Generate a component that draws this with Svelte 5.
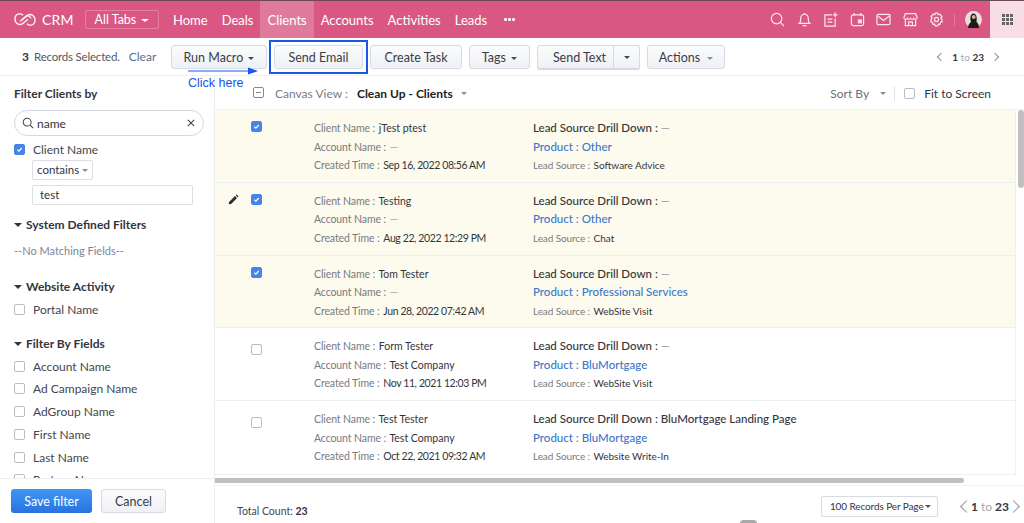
<script>
  const tabs = ['Home', 'Deals', 'Clients', 'Accounts', 'Activities', 'Leads'];

  const records = [
    { name: 'jTest ptest', account: '—', created: 'Sep 16, 2022 08:56 AM', drill: '—', product: 'Other', source: 'Software Advice', selected: true },
    { name: 'Testing', account: '—', created: 'Aug 22, 2022 12:29 PM', drill: '—', product: 'Other', source: 'Chat', selected: true, edit: true },
    { name: 'Tom Tester', account: '—', created: 'Jun 28, 2022 07:42 AM', drill: '—', product: 'Professional Services', source: 'WebSite Visit', selected: true },
    { name: 'Form Tester', account: 'Test Company', created: 'Nov 11, 2021 12:03 PM', drill: '—', product: 'BluMortgage', source: 'WebSite Visit', selected: false },
    { name: 'Test Tester', account: 'Test Company', created: 'Oct 22, 2021 09:32 AM', drill: 'BluMortgage Landing Page', product: 'BluMortgage', source: 'Website Write-In', selected: false }
  ];

  const fields = ['Account Name', 'Ad Campaign Name', 'AdGroup Name', 'First Name', 'Last Name', 'Partner Name'];
</script>

<div class="page">
  <header class="nav">
    <div class="brand">
      <svg width="22" height="15" viewBox="0 0 22 15" fill="none" stroke="#fff" stroke-width="1.4" opacity="0.9">
        <path d="M9 3.2 C6.5 0.8 1 1.4 1 7 C1 11.6 5.6 14 9 11.4 L14 7.2" />
        <path d="M13 11.8 C15.5 14.2 21 13.6 21 8 C21 3.4 16.4 1 13 3.6 L8 7.8" />
        <path d="M6 9.5 L12 4.4 C13.5 3.2 16.5 4 17 6.5" />
      </svg>
      <span>CRM</span>
    </div>
    <button class="alltabs">All Tabs <i class="caret white"></i></button>
    <nav class="tabs">
      {#each tabs as tab}
        <span class="tab" class:active={tab === 'Clients'}>{tab}</span>
      {/each}
      <span class="more"><b></b><b></b><b></b></span>
    </nav>
    <div class="nav-icons">
      <svg viewBox="0 0 16 16" width="15" height="15"><circle cx="7" cy="7" r="5.6" /><path d="M11 11 L15 15" /></svg>
      <svg viewBox="0 0 16 16" width="15" height="15"><path d="M2.5 12.2 C4 11 4 9 4 6.8 C4 4.4 5.8 2.4 8 2.4 C10.2 2.4 12 4.4 12 6.8 C12 9 12 11 13.5 12.2 Z" /><path d="M8 1 V2.4 M6 14.6 H10" /></svg>
      <svg viewBox="0 0 16 16" width="15" height="15"><path d="M9.5 3 H2 V15 H13 V7" /><path d="M4.8 7.5 H10 M4.8 10.8 H10" /><path d="M13 0.5 V5.5 M10.5 3 H15.5" /></svg>
      <svg viewBox="0 0 16 16" width="15" height="15"><rect x="1.5" y="3" width="13" height="11.5" rx="2" /><path d="M4.5 1 V4 M11.5 1 V4" /><rect x="9" y="8.5" width="3" height="3" fill="#fbe6ee" /></svg>
      <svg viewBox="0 0 16 16" width="15" height="15"><rect x="1" y="2.5" width="14" height="11" rx="1.5" /><path d="M1.5 4 L8 9 L14.5 4" /></svg>
      <svg viewBox="0 0 16 16" width="15" height="15"><path d="M2.5 1.8 H13.5 L15 6 C15 8.2 12 8.2 11.5 6.8 C11 8.2 8.6 8.2 8 6.8 C7.4 8.2 5 8.2 4.5 6.8 C4 8.2 1 8.2 1 6 Z" /><path d="M2.5 8.2 V14.5 H13.5 V8.2" /><path d="M6 14.5 V10.5 H10 V14.5" /></svg>
      <svg viewBox="0 0 16 16" width="15" height="15"><path d="M6.6 1.2 H9.4 L9.9 3 L11.7 2.4 L13.9 5 L12.6 6.4 L13.9 8 L13.9 10.6 L12.2 11 L11.7 13.2 L9.9 13 L9.4 14.8 H6.6 L6.1 13 L4.3 13.2 L3.8 11 L2.1 10.6 V8 L3.4 6.4 L2.1 5 L4.3 2.4 L6.1 3 Z" /><circle cx="8" cy="8" r="2.2" /></svg>
      <span class="vsep"></span>
      <svg class="avatar" viewBox="0 0 17 17" width="17" height="17">
        <circle cx="8.5" cy="8.5" r="8.5" fill="#e9dfd6" />
        <path d="M3 17 C3.5 13 5 12 6 11 C5 8 5 2.5 8.5 2.5 C12 2.5 12 8 11.5 11 C12.5 12 14 13 14 17 Z" fill="#1d1a1b" />
        <circle cx="8.7" cy="6" r="2" fill="#d9ae95" />
      </svg>
    </div>
    <div class="grid-tile">
      {#each Array(9) as _}<i></i>{/each}
    </div>
  </header>

  <div class="toolbar">
    <div class="selected"><b>3</b> <span class="rec">Records Selected.</span> <span class="clear">Clear</span></div>
    <div class="actions">
      <button class="btn w-macro">Run Macro <i class="caret"></i></button>
      <button class="btn w-email">Send Email</button>
      <button class="btn w-task">Create Task</button>
      <button class="btn w-tags">Tags <i class="caret"></i></button>
      <div class="btn split">
        <span class="split-main">Send Text</span>
        <span class="split-side"><i class="caret"></i></span>
      </div>
      <button class="btn w-actions">Actions <i class="caret light wide"></i></button>
    </div>
    <div class="pager">
      <i class="chev left"></i>
      <span><b>1</b> <em>to</em> <b>23</b></span>
      <i class="chev right"></i>
    </div>
  </div>

  <div class="body">
    <aside class="side">
      <div class="side-scroll">
        <h3>Filter Clients by</h3>
        <div class="search">
          <svg viewBox="0 0 14 14" width="12" height="12"><circle cx="6" cy="6" r="4.6" /><path d="M9.5 9.5 L13 13" /></svg>
          <span>name</span>
          <svg class="x" viewBox="0 0 10 10" width="8" height="8"><path d="M1 1 L9 9 M9 1 L1 9" /></svg>
        </div>
        <label class="check first"><span class="box on"><svg viewBox="0 0 12 12"><path d="M3 6.2 L5.2 8.2 L9 4" /></svg></span>Client Name</label>
        <div class="contains">contains <i class="caret light"></i></div>
        <div class="test">test</div>

        <h4 class="sys"><i class="caret dark"></i>System Defined Filters</h4>
        <p class="none">--No Matching Fields--</p>
        <h4 class="web"><i class="caret dark"></i>Website Activity</h4>
        <label class="check portal"><span class="box"></span>Portal Name</label>
        <h4 class="by"><i class="caret dark"></i>Filter By Fields</h4>
        <div class="field-list">
          {#each fields as field}
            <label class="check"><span class="box"></span>{field}</label>
          {/each}
        </div>
      </div>
      <div class="side-foot">
        <button class="save">Save filter</button>
        <button class="btn cancel">Cancel</button>
      </div>
    </aside>

    <main class="main">
      <div class="view-bar">
        <span class="minus"></span>
        <span class="canvas">Canvas View :</span>
        <strong>Clean Up - Clients</strong>
        <i class="caret light"></i>
        <div class="view-right">
          <span class="sort">Sort By</span>
          <i class="caret light"></i>
          <span class="vline"></span>
          <span class="box"></span>
          <span class="fit">Fit to Screen</span>
        </div>
      </div>

      <div class="list-wrap">
        <div class="list">
          {#each records as r}
            <div class="row" class:hl={r.selected}>
              <div class="row-edit">
                {#if r.edit}
                  <svg viewBox="0 0 12 12" width="11" height="11"><path d="M0.8 11.2 L1.2 8.6 L7.6 2.2 L9.8 4.4 L3.4 10.8 Z M8.4 1.4 L9.4 0.5 L11.5 2.6 L10.6 3.6 Z" fill="#2c2c30" /></svg>
                {/if}
              </div>
              <div class="row-check" class:off={!r.selected}>
                {#if r.selected}
                  <span class="box on"><svg viewBox="0 0 12 12"><path d="M3 6.2 L5.2 8.2 L9 4" /></svg></span>
                {:else}
                  <span class="box"></span>
                {/if}
              </div>
              <div class="col-a">
                <div class="l-one"><span class="lbl">Client Name :</span> <span class="val">{r.name}</span></div>
                <div class="l-two"><span class="lbl">Account Name :</span> <span class="val" class:dash={r.account === '—'}>{r.account}</span></div>
                <div class="l-three"><span class="lbl">Created Time :</span> <span class="val time">{r.created}</span></div>
              </div>
              <div class="col-b">
                <div class="l-one drill">Lead Source Drill Down : <span class:dash={r.drill === '—'}>{r.drill}</span></div>
                <div class="l-two product">Product : {r.product}</div>
                <div class="l-three source"><span class="lbl">Lead Source :</span> <span class="val">{r.source}</span></div>
              </div>
            </div>
          {/each}
        </div>
        <div class="vscroll"><span></span></div>
      </div>

      <div class="hscroll"><span></span></div>

      <footer class="foot">
        <span class="total">Total Count: <b>23</b></span>
        <div class="perpage">100 Records Per Page<i class="caret navy"></i></div>
        <div class="pager big">
          <i class="chev left"></i>
          <span><b>1</b> <em>to</em> <b>23</b></span>
          <i class="chev right"></i>
        </div>
      </footer>
      <span class="peek"></span>
    </main>
  </div>

  <!-- annotation drawn on top of the screenshot -->
  <div class="mark"></div>
  <svg class="arrow" width="71" height="8" viewBox="0 0 71 8"><path d="M0 4 H60" stroke="#1a56e8" stroke-width="1.2" /><path d="M60 0.5 L70 4 L60 7.5 Z" fill="#1a56e8" /></svg>
  <span class="click">Click here</span>
</div>

<style>
  :global(body) {
    margin: 0;
    background: #fff;
  }

  .page {
    position: relative;
    width: 1024px;
    height: 523px;
    overflow: hidden;
    font-family: Lato, "Liberation Sans", sans-serif;
    color: #33353d;
    display: flex;
    flex-direction: column;
  }

  button {
    font-family: inherit;
  }

  .caret {
    display: inline-block;
    width: 0;
    height: 0;
    border-left: 3px solid transparent;
    border-right: 3px solid transparent;
    border-top: 3.5px solid #444750;
    vertical-align: 2px;
  }
  .caret.white {
    border-top-color: #fff;
    border-left-width: 4px;
    border-right-width: 4px;
    margin-left: 2px;
  }
  .caret.light { border-top-color: #8b8e96; }
  .caret.navy { border-top-color: #3a5d80; }
  .caret.dark {
    border-left-width: 4px;
    border-right-width: 4px;
    border-top: 4px solid #33353d;
  }

  /* top bar */
  .nav {
    flex: none;
    height: 37px;
    border-top: 1px solid #6b4a55;
    background: #d95782;
    display: flex;
    align-items: stretch;
    color: #fff;
  }
  .brand {
    display: flex;
    align-items: center;
    gap: 6px;
    margin-left: 14px;
    width: 71px;
    font-size: 14px;
    letter-spacing: 0.2px;
  }
  .alltabs {
    align-self: center;
    width: 74px;
    height: 19px;
    padding: 0;
    border: 1px solid #e67fa1;
    border-radius: 2px;
    background: transparent;
    color: #fff;
    font-size: 12.5px;
  }
  .tabs {
    display: flex;
    margin-left: 7px;
    font-size: 13px;
  }
  .tab {
    display: flex;
    align-items: center;
    padding: 0 7px;
  }
  .tab.active {
    background: #e07a9c;
  }
  .more {
    display: flex;
    align-items: center;
    gap: 1.5px;
    margin-left: 10px;
  }
  .more b {
    width: 2.5px;
    height: 2.5px;
    border-radius: 50%;
    background: #fff;
  }
  .nav-icons {
    margin-left: auto;
    display: flex;
    align-items: center;
    gap: 11.5px;
    padding-right: 8px;
  }
  .nav-icons svg {
    fill: none;
    stroke: #fbe6ee;
    stroke-width: 1.3;
  }
  .nav-icons .avatar {
    stroke: none;
    margin-left: -1px;
  }
  .vsep {
    width: 1px;
    height: 12px;
    background: #e27c9e;
    margin-left: -2px;
  }
  .grid-tile {
    width: 34px;
    background: #f8dce6;
    display: grid;
    grid-template-columns: repeat(3, 3px);
    grid-auto-rows: 3px;
    gap: 1px;
    align-content: center;
    justify-content: center;
  }
  .grid-tile i {
    background: #66636b;
  }

  /* toolbar */
  .toolbar {
    flex: none;
    height: 38px;
    box-sizing: border-box;
    border-bottom: 1px solid #eef0f4;
    display: flex;
    align-items: center;
    font-size: 12px;
  }
  .selected {
    width: 171px;
    padding-left: 22px;
    box-sizing: border-box;
    color: #55585f;
    white-space: nowrap;
  }
  .selected b {
    color: #33353d;
    margin-right: 2px;
  }
  .rec {
    font-size: 11.5px;
    letter-spacing: -0.2px;
  }
  .clear {
    margin-left: 6px;
    color: #5c6f8a;
  }
  .actions {
    display: flex;
    align-items: flex-start;
    gap: 7px;
    height: 25px;
    margin-top: 2px;
  }
  .btn {
    box-sizing: border-box;
    height: 24px;
    padding: 0;
    border: 1px solid #d5dbe4;
    border-radius: 3px;
    background: linear-gradient(#fbfcfd, #eef1f5);
    color: #3b3d45;
    font-size: 12.5px;
    white-space: nowrap;
  }
  .btn .caret {
    margin-left: 2px;
  }
  .btn .caret.wide {
    margin-left: 4px;
  }
  .w-macro { width: 96px; }
  .w-email { width: 89px; }
  .w-task { width: 92px; }
  .w-tags { width: 61px; }
  .w-actions { width: 78px; }
  .split {
    display: flex;
    height: 25px;
    width: 103px;
    border-width: 1px 1px 2px;
  }
  .split-main {
    flex: 1;
    display: flex;
    align-items: center;
    justify-content: center;
    padding-left: 8px;
    margin-top: 1px;
  }
  .split-side {
    width: 25px;
    display: flex;
    align-items: center;
    justify-content: center;
    border-left: 1px solid #d5dbe4;
  }
  .split-side .caret {
    margin-left: 0;
  }
  .pager {
    margin-left: auto;
    display: flex;
    align-items: center;
    gap: 8px;
    padding-right: 26px;
    font-size: 10px;
  }
  .pager b {
    color: #33353d;
  }
  .pager em {
    font-style: normal;
    color: #a4a7ae;
  }
  .chev {
    width: 5px;
    height: 5px;
    border-left: 1px solid #8f9299;
    border-bottom: 1px solid #8f9299;
  }
  .chev.left { transform: rotate(45deg); }
  .chev.right { transform: rotate(-135deg); }

  /* body */
  .body {
    flex: 1;
    min-height: 0;
    display: flex;
  }
  .side {
    flex: none;
    width: 215px;
    box-sizing: border-box;
    border-right: 1px solid #eceef2;
    display: flex;
    flex-direction: column;
    font-size: 12px;
  }
  .side-scroll {
    flex: 1;
    min-height: 0;
    overflow: hidden;
    padding-left: 14px;
  }
  h3 {
    margin: 10px 0 0;
    height: 16px;
    line-height: 16px;
    font-size: 12px;
    font-weight: 700;
    color: #33353d;
  }
  h4 {
    margin: 0;
    height: 16px;
    line-height: 16px;
    font-size: 12px;
    font-weight: 700;
    color: #33353d;
  }
  h4 .caret {
    margin-right: 4px;
    vertical-align: 2px;
  }
  .search {
    box-sizing: border-box;
    width: 190px;
    height: 26px;
    margin-top: 8px;
    border: 1px solid #d5d8de;
    border-radius: 13px;
    display: flex;
    align-items: center;
    gap: 3px;
    padding: 0 8px 0 7px;
  }
  .search svg {
    fill: none;
    stroke: #44464d;
    stroke-width: 1.2;
  }
  .search span {
    flex: 1;
  }
  .search .x {
    stroke-width: 1.4;
  }
  .box {
    flex: none;
    box-sizing: border-box;
    display: inline-block;
    width: 11px;
    height: 11px;
    border: 1px solid #b9bcc3;
    border-radius: 2px;
    background: #fff;
  }
  .box.on {
    background: #4584e8;
    border-color: #4584e8;
  }
  .box svg {
    display: block;
    width: 100%;
    height: 100%;
    fill: none;
    stroke: #fff;
    stroke-width: 1.6;
  }
  .check {
    display: flex;
    align-items: center;
    gap: 8px;
    height: 22.75px;
    color: #44464d;
    white-space: nowrap;
  }
  .check.first {
    height: 16px;
    margin-top: 5px;
  }
  .contains {
    box-sizing: border-box;
    width: 61px;
    height: 20px;
    margin: 3px 0 0 18px;
    border: 1px solid #dcdee3;
    border-radius: 2px;
    font-size: 11.5px;
    line-height: 18px;
    padding-left: 4px;
    white-space: nowrap;
  }
  .test {
    box-sizing: border-box;
    width: 161px;
    height: 20px;
    margin: 5px 0 0 18px;
    border: 1px solid #dcdee3;
    border-radius: 2px;
    font-size: 11.5px;
    line-height: 18px;
    padding-left: 7px;
  }
  .sys { margin-top: 12px; }
  .none {
    margin: 10px 0 0;
    height: 16px;
    line-height: 16px;
    font-size: 11px;
    color: #7c8698;
  }
  .web { margin-top: 20px; }
  .portal { margin-top: 3px; }
  .by { margin-top: 15px; }
  .field-list {
    margin-top: 3px;
  }
  .side-foot {
    flex: none;
    height: 45px;
    box-sizing: border-box;
    border-top: 1px solid #eceef2;
    display: flex;
    align-items: center;
    gap: 9px;
    padding: 0 0 0 11px;
  }
  .save {
    width: 81px;
    height: 24px;
    border: none;
    border-radius: 3px;
    background: linear-gradient(#3f97f5, #2873e0);
    color: #fff;
    font-size: 12.5px;
  }
  .cancel {
    width: 65px;
  }

  /* main */
  .main {
    position: relative;
    flex: 1;
    min-width: 0;
    display: flex;
    flex-direction: column;
  }
  .view-bar {
    flex: none;
    height: 34px;
    box-sizing: border-box;
    display: flex;
    align-items: center;
    padding: 2px 0 0 38px;
    font-size: 12px;
    border-bottom: 1px solid #eef0f4;
  }
  .minus {
    position: relative;
    box-sizing: border-box;
    width: 11px;
    height: 11px;
    border: 1px solid #85878e;
    border-radius: 2px;
    margin: -2px 11px 0 0;
  }
  .minus::after {
    content: '';
    position: absolute;
    left: 2px;
    right: 2px;
    top: 4px;
    height: 1px;
    background: #85878e;
  }
  .canvas {
    color: #7b7d84;
    margin-right: 9px;
  }
  .view-bar strong {
    color: #1d1e22;
    font-weight: 700;
    margin-right: 8px;
  }
  .view-right {
    margin-left: auto;
    display: flex;
    align-items: center;
    padding-right: 33px;
  }
  .sort {
    color: #6d6f76;
    margin-right: 11px;
  }
  .vline {
    width: 1px;
    height: 15px;
    background: #e0e2e6;
    margin: 0 9px 0 8px;
  }
  .fit {
    margin-left: 9px;
    color: #33353d;
  }
  .list-wrap {
    flex: none;
    height: 365px;
    display: flex;
    overflow: hidden;
  }
  .list {
    flex: 1;
    min-width: 0;
    border-right: 1px solid #eef0f4;
    border-bottom: 1px solid #eef0f4;
  }
  .row {
    height: 72.8px;
    box-sizing: border-box;
    border-bottom: 1px solid #eceef1;
    display: flex;
    background: #fff;
    font-size: 10.5px;
  }
  .row:last-child {
    border-bottom: none;
  }
  .row.hl {
    background: #fdfbee;
  }
  .row-edit {
    width: 36px;
    box-sizing: border-box;
    padding: 11px 0 0 13px;
  }
  .row-check {
    width: 63px;
    padding-top: 11px;
  }
  .row-check.off {
    padding-top: 16px;
  }
  .row-check .box {
    display: block;
  }
  .col-a {
    width: 219px;
  }
  .col-b {
    flex: 1;
  }
  .l-one, .l-two, .l-three {
    height: 18.5px;
    line-height: 18.5px;
    white-space: nowrap;
  }
  .l-one { margin-top: 9px; }
  .lbl {
    color: #787a81;
    margin-right: 1px;
    letter-spacing: -0.1px;
  }
  .val {
    color: #33353d;
  }
  .time {
    letter-spacing: -0.4px;
  }
  .dash {
    color: #a0a2a8;
  }
  .drill {
    font-size: 11.5px;
    font-weight: 500;
    color: #33353d;
  }
  .product {
    font-size: 11.5px;
    font-weight: 500;
    color: #3b77c9;
  }
  .source {
    font-size: 10px;
  }
  .vscroll {
    flex: none;
    width: 8px;
    background: #fff;
  }
  .vscroll span {
    display: block;
    width: 6px;
    height: 78px;
    margin-left: 2px;
    border-radius: 3px;
    background: #c0c0c0;
  }
  .hscroll {
    flex: none;
    height: 10px;
    background: #fff;
    padding-top: 3px;
    box-sizing: border-box;
  }
  .hscroll span {
    display: block;
    width: 749px;
    height: 5px;
    border-radius: 0 3px 3px 0;
    background: #bfbfbf;
  }
  .foot {
    flex: 1;
    display: flex;
    align-items: center;
    padding-left: 22px;
    border-top: 1px solid #f3f4f6;
    font-size: 10.5px;
  }
  .total {
    color: #44464d;
    margin-top: 12px;
  }
  .total b {
    color: #33353d;
  }
  .perpage {
    box-sizing: border-box;
    width: 117px;
    height: 21px;
    margin-left: auto;
    margin-top: 3px;
    border: 1px solid #d9dbe0;
    border-radius: 2px;
    line-height: 19px;
    padding-left: 8px;
    font-size: 10px;
    letter-spacing: -0.1px;
    color: #33353d;
    white-space: nowrap;
  }
  .perpage .caret {
    margin-left: 1px;
  }
  .pager.big {
    margin-left: 24px;
    margin-top: 3px;
    padding-right: 6px;
    gap: 0;
    font-size: 12px;
  }
  .pager.big .chev {
    width: 8px;
    height: 8px;
  }
  .peek {
    position: absolute;
    left: 525px;
    bottom: -4px;
    width: 17px;
    height: 7px;
    border-radius: 4px;
    background: #a9a9a9;
  }

  /* annotation */
  .mark {
    position: absolute;
    left: 269px;
    top: 40px;
    width: 99px;
    height: 34px;
    box-sizing: border-box;
    border: 2px solid #1a56e8;
  }
  .arrow {
    position: absolute;
    left: 188px;
    top: 67px;
  }
  .click {
    position: absolute;
    left: 188px;
    top: 75px;
    font-family: "Liberation Sans", Arial, sans-serif;
    font-size: 12.5px;
    line-height: 16px;
    color: #1a56e8;
  }
</style>
